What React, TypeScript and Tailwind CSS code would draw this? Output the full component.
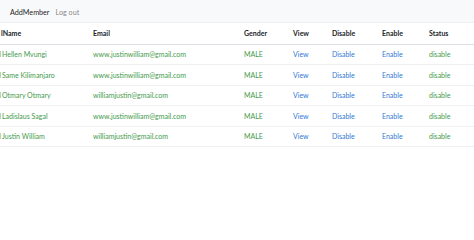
const members = [
  { name: "Hellen Mvungi", email: "www.justinwilliam@gmail.com" },
  { name: "Same Kilimanjaro", email: "www.justinwilliam@gmail.com" },
  { name: "Otmary Otmary", email: "williamjustin@gmail.com" },
  { name: "Ladislaus Sagal", email: "www.justinwilliam@gmail.com" },
  { name: "Justin William", email: "williamjustin@gmail.com" },
];

export default function App() {
  return (
    <div className="min-h-[221px] w-[474px] bg-white text-[7px] text-[#212529] [font-family:Lato,sans-serif]">
      <nav className="flex h-[23px] items-center gap-[6px] border-b border-[#eceef0] bg-[#f8f9fa] px-[10px] pt-[5px] text-[7.2px]">
        <span className="text-black/90">AddMember</span>
        <span className="text-black/50">Log out</span>
      </nav>
      <table className="w-full table-fixed border-collapse text-left">
        <thead>
          <tr className="h-[21px] border-b border-[#dee2e6]">
            <th className="w-[91px] whitespace-nowrap pl-[1px] font-bold">lName</th>
            <th className="w-[151px] pl-[2px] font-bold">Email</th>
            <th className="w-[49px] pl-[2px] font-bold">Gender</th>
            <th className="w-[39px] pl-[2px] font-bold">View</th>
            <th className="w-[50px] pl-[2px] font-bold">Disable</th>
            <th className="w-[47px] pl-[2px] font-bold">Enable</th>
            <th className="pl-[2px] font-bold">Status</th>
          </tr>
        </thead>
        <tbody>
          {members.map((m) => (
            <tr key={m.name} className="h-[20.5px] border-b border-[#eef0f2]">
              <td className="whitespace-nowrap text-[#3f9a4b]">
                <span className="flex items-center gap-[1px]">
                  <span className="h-[6px] w-px bg-[#3f9a4b]/40" />
                  {m.name}
                </span>
              </td>
              <td className="whitespace-nowrap pl-[2px] text-[#3f9a4b]">{m.email}</td>
              <td className="pl-[2px] text-[#3f9a4b]">MALE</td>
              <td className="pl-[2px] text-[#2f78d6]">View</td>
              <td className="pl-[2px] text-[#2f78d6]">Disable</td>
              <td className="pl-[2px] text-[#2f78d6]">Enable</td>
              <td className="pl-[2px] text-[#3f9a4b]">disable</td>
            </tr>
          ))}
        </tbody>
      </table>
    </div>
  );
}
